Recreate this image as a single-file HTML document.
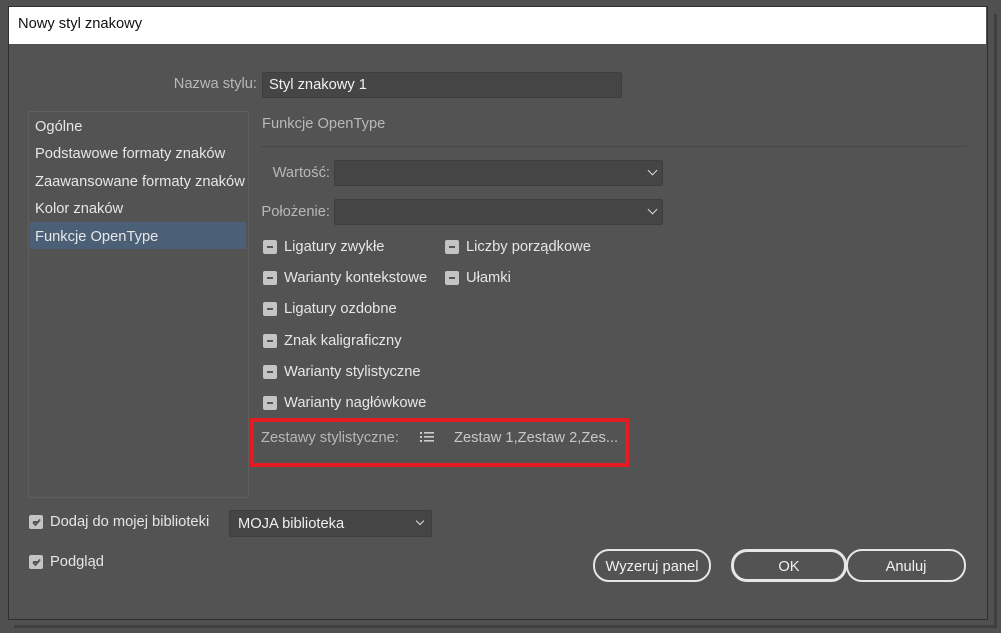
<!DOCTYPE html>
<html><head><meta charset="utf-8"><style>
body{margin:0;width:1001px;height:633px;background:#505050;position:relative;overflow:hidden;font-family:"Segoe UI","Liberation Sans","DejaVu Sans",sans-serif;font-size:14.7px;color:#e6e6e6}
.a{position:absolute;white-space:nowrap}
.dlg{left:8px;top:6px;width:978px;height:612px;background:#535353;border:1px solid #2e2e2e}
.title{left:9px;top:7px;width:977px;height:37px;background:#fff;color:#111;font-size:14.7px}
.inp{background:#454545;border:1px solid #3e3e3e;border-radius:2px}
.lbl{color:#b8b8b8}
.cb{width:14px;height:14px;background:#c4c4c4;border-radius:2px}
.cb::after{content:"";position:absolute;left:4px;top:6px;width:6px;height:2px;background:#555}
.chev{position:absolute;right:6px;top:6px;width:6px;height:6px;border-right:1.6px solid #ddd;border-bottom:1.6px solid #ddd;transform:rotate(45deg)}
.btn{border:2px solid #e6e6e6;border-radius:16px;text-align:center;line-height:32px;color:#f0f0f0}
</style></head><body>
<div class="a" style="left:994px;top:14px;width:3px;height:614px;background:#3e3e3e"></div>
<div class="a" style="left:14px;top:625px;width:982px;height:3px;background:#3e3e3e"></div>
<div class="a dlg"></div>
<div class="a title"><span style="position:absolute;left:9px;top:9px">Nowy styl znakowy</span></div>

<div class="a lbl" style="right:744px;top:76px">Nazwa stylu:</div>
<div class="a inp" style="left:262px;top:72px;width:358px;height:24px"><span style="position:absolute;left:6px;top:4px;color:#f0f0f0">Styl znakowy 1</span></div>

<div class="a" style="left:28px;top:111px;width:219px;height:385px;border:1px solid #5f5f5f;border-radius:2px"></div>
<div class="a" style="left:30px;top:222px;width:216px;height:27px;background:#4b6076"></div>
<div class="a" style="left:35px;top:119px">Ogólne</div>
<div class="a" style="left:35px;top:146px">Podstawowe formaty znaków</div>
<div class="a" style="left:35px;top:174px">Zaawansowane formaty znaków</div>
<div class="a" style="left:35px;top:201px">Kolor znaków</div>
<div class="a" style="left:35px;top:229px">Funkcje OpenType</div>

<div class="a lbl" style="left:262px;top:116px">Funkcje OpenType</div>
<div class="a" style="left:261px;top:146px;width:705px;height:1px;background:#484848"></div>

<div class="a lbl" style="right:671px;top:165px">Wartość:</div>
<div class="a inp" style="left:334px;top:160px;width:327px;height:24px"><div class="chev"></div></div>
<div class="a lbl" style="right:671px;top:204px">Położenie:</div>
<div class="a inp" style="left:334px;top:199px;width:327px;height:24px"><div class="chev"></div></div>

<div class="a cb" style="left:263px;top:240px"></div><div class="a" style="left:284px;top:239px">Ligatury zwykłe</div>
<div class="a cb" style="left:445px;top:240px"></div><div class="a" style="left:466px;top:239px">Liczby porządkowe</div>
<div class="a cb" style="left:263px;top:271px"></div><div class="a" style="left:284px;top:270px">Warianty kontekstowe</div>
<div class="a cb" style="left:445px;top:271px"></div><div class="a" style="left:466px;top:270px">Ułamki</div>
<div class="a cb" style="left:263px;top:302px"></div><div class="a" style="left:284px;top:301px">Ligatury ozdobne</div>
<div class="a cb" style="left:263px;top:334px"></div><div class="a" style="left:284px;top:333px">Znak kaligraficzny</div>
<div class="a cb" style="left:263px;top:365px"></div><div class="a" style="left:284px;top:364px">Warianty stylistyczne</div>
<div class="a cb" style="left:263px;top:396px"></div><div class="a" style="left:284px;top:395px">Warianty nagłówkowe</div>

<div class="a" style="left:250px;top:418px;width:371px;height:41px;border:4px solid #e31b23"></div>
<div class="a lbl" style="left:261px;top:430px">Zestawy stylistyczne:</div>
<svg class="a" style="left:420px;top:431px" width="16" height="12"><g fill="#ccc"><rect x="0" y="1" width="2" height="2"/><rect x="0" y="5" width="2" height="2"/><rect x="0" y="9" width="2" height="2"/><rect x="4" y="1" width="10" height="1.6"/><rect x="4" y="5" width="10" height="1.6"/><rect x="4" y="9" width="10" height="1.6"/></g></svg>
<div class="a lbl" style="left:454px;top:430px;color:#c8c8c8">Zestaw 1,Zestaw 2,Zes...</div>

<div class="a cb" style="left:29px;top:515px"></div>
<svg class="a" style="left:30px;top:516px" width="13" height="13"><path d="M3 6.5 L5.5 9 L10 3.5" stroke="#555" stroke-width="1.8" fill="none"/></svg>
<div class="a" style="left:50px;top:514px">Dodaj do mojej biblioteki</div>
<div class="a inp" style="left:229px;top:510px;width:201px;height:25px"><span style="position:absolute;left:8px;top:5px;color:#f0f0f0">MOJA biblioteka</span><div class="chev" style="right:8px;top:7px;width:5px;height:5px"></div></div>

<div class="a cb" style="left:29px;top:555px"></div>
<svg class="a" style="left:30px;top:556px" width="13" height="13"><path d="M3 6.5 L5.5 9 L10 3.5" stroke="#555" stroke-width="1.8" fill="none"/></svg>
<div class="a" style="left:50px;top:554px">Podgląd</div>

<div class="a btn" style="left:593px;top:549px;width:114px;height:29px">Wyzeruj panel</div>
<div class="a btn" style="left:731px;top:549px;width:110px;height:27px;border-width:3px;line-height:30px">OK</div>
<div class="a btn" style="left:846px;top:549px;width:116px;height:29px">Anuluj</div>
</body></html>
